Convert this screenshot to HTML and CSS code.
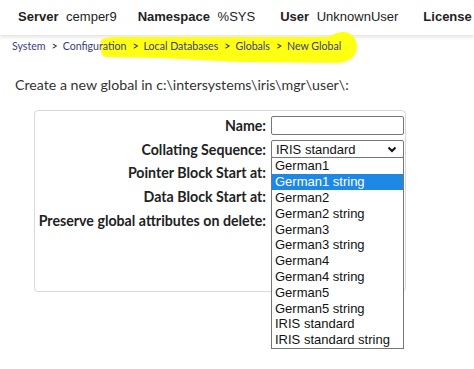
FILE: index.html
```html
<!DOCTYPE html>
<html lang="en">
<head>
  <meta charset="UTF-8" />
  <title>New Global</title>
  <link rel="stylesheet" href="styles.css">
</head>
<body>
  <div class="topbar">
    <span class="info"><b>Server</b> cemper9</span>
    <span class="info"><b>Namespace</b> %SYS</span>
    <span class="info user"><b>User</b> UnknownUser</span>
    <span class="info license"><b>License</b><i class="dot"></i></span>
  </div>

  <svg class="marker" width="474" height="70" viewBox="0 0 474 70">
    <path d="M101 41 C101 38 108 37 118 37 L326 37 C333 36 336 32 343 32 C351 32 357 38 357 46 C357 56 350 63 336 63 L240 62 L160 58 L106 57 C102 56 101 53 101 49 Z" fill="#ffff14"/>
  </svg>

  <div class="crumbs">
    <a>System</a><span class="sep">&gt;</span><a>Configuration</a><span class="sep">&gt;</span><a>Local Databases</a><span class="sep">&gt;</span><a>Globals</a><span class="sep">&gt;</span><a>New Global</a>
  </div>

  <p class="intro">Create a new global in c:\intersystems\iris\mgr\user\:</p>

  <div class="formbox">
    <div class="row">
      <label>Name:</label>
      <input class="field" type="text">
    </div>
    <div class="row">
      <label>Collating Sequence:</label>
      <div class="selectwrap">
        <div class="select">
          <span>IRIS standard</span>
          <svg width="10" height="7" viewBox="0 0 10 7"><path d="M1.5 1.5 L5 5 L8.5 1.5" fill="none" stroke="#111" stroke-width="2"/></svg>
        </div>
        <ul class="options">
          <li>German1</li>
          <li class="active">German1 string</li>
          <li>German2</li>
          <li>German2 string</li>
          <li>German3</li>
          <li>German3 string</li>
          <li>German4</li>
          <li>German4 string</li>
          <li>German5</li>
          <li>German5 string</li>
          <li>IRIS standard</li>
          <li>IRIS standard string</li>
        </ul>
      </div>
    </div>
    <div class="row">
      <label>Pointer Block Start at:</label>
      <span></span>
    </div>
    <div class="row">
      <label>Data Block Start at:</label>
      <span></span>
    </div>
    <div class="row">
      <label>Preserve global attributes on delete:</label>
      <span></span>
    </div>
  </div>
</body>
</html>
```

FILE: styles.css
```css
* {
  box-sizing: border-box;
}

html, body {
  min-height: 100vh;
}

body {
  margin: 0;
  background: #fff;
  color: #222;
  font-family: "Liberation Sans", Arial, sans-serif;
  position: relative;
}

.topbar {
  height: 35px;
  display: flex;
  align-items: center;
  gap: 21px;
  padding: 0 0 3px 18px;
  font-size: 13px;
  white-space: nowrap;
  overflow: hidden;
  box-shadow: 0 2px 4px rgba(0, 0, 0, 0.12);
  position: relative;
  z-index: 1;
}

.topbar b {
  margin-right: 4px;
}

.topbar .user {
  margin-left: 4px;
}

.topbar .license {
  margin-left: 4px;
}

.dot {
  display: inline-block;
  width: 5px;
  height: 5px;
  margin-left: 1px;
  border-radius: 50%;
  background: #e8694a;
  vertical-align: middle;
}

.marker {
  position: absolute;
  left: 0;
  top: 0;
  z-index: 2;
}

.crumbs {
  position: relative;
  z-index: 3;
  padding: 5px 0 0 12px;
  height: 27px;
  font-family: Lato, "Open Sans", sans-serif;
  font-size: 10.6px;
  color: #3b3d80;
}

.crumbs .sep {
  color: #222;
  margin: 0 5px 0 6px;
}

.intro {
  margin: 14px 0 0 15px;
  font-family: Lato, "Open Sans", sans-serif;
  font-size: 14.2px;
  color: #333;
}

.formbox {
  margin: 17px 0 0 34px;
  width: 372px;
  height: 182px;
  border: 1px solid #d9d9d9;
  border-radius: 4px;
  padding-top: 3px;
}

.row {
  display: grid;
  grid-template-columns: 231px 133px;
  column-gap: 5px;
  height: 23.6px;
  align-items: center;
}

.row label {
  text-align: right;
  font-family: Lato, "Open Sans", sans-serif;
  font-weight: 700;
  font-size: 14.2px;
  color: #222;
  white-space: nowrap;
}

.field {
  height: 19px;
  width: 133px;
  border: 1px solid #767676;
  border-radius: 2px;
  margin: 0;
}

.selectwrap {
  position: relative;
  height: 18px;
}

.select {
  height: 18px;
  border: 1px solid #767676;
  border-radius: 2px;
  display: flex;
  align-items: center;
  justify-content: space-between;
  padding: 0 6px 0 4px;
  font-size: 13px;
  color: #111;
}

.options {
  position: absolute;
  left: 0;
  top: 17px;
  width: 133px;
  margin: 0;
  padding: 0;
  list-style: none;
  background: #fff;
  border: 1px solid #767676;
  font-size: 13px;
  color: #111;
  z-index: 4;
}

.options li {
  height: 15.8px;
  line-height: 15.8px;
  padding-left: 3px;
}

.options li.active {
  background: #1e88e5;
  color: #fff;
}
```
